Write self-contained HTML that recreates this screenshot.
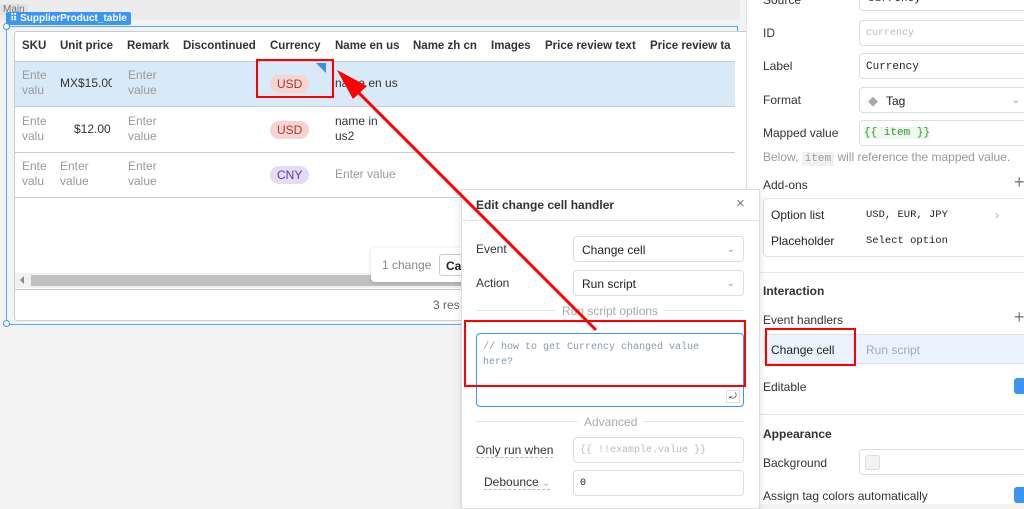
<!DOCTYPE html>
<html><head><meta charset="utf-8"><style>
*{box-sizing:border-box;margin:0;padding:0}
body{width:1024px;height:504px;overflow:hidden;background:#f3f3f3;font-family:"Liberation Sans",sans-serif;font-size:12px;color:#222;position:relative}
.a{position:absolute}
.ph{color:#9a9a9a}
.tag{position:absolute;border-radius:9px;padding:2px 7px;font-size:12px}
.mono{font-family:"Liberation Mono",monospace}
.inp{position:absolute;border:1px solid #ddd;border-radius:4px;background:#fff}
.chev{position:absolute;right:8px;top:7px;color:#999;font-size:10px}
</style></head><body>
<div class="a" style="left:0;top:0;width:740px;height:20px;background:#ececec"></div>
<div class="a" style="left:0;top:4px;font-size:10px;color:#777;background:#e2e2e2;padding:0 3px;border-radius:2px">Main</div>
<div class="a" style="left:6px;top:12px;background:#3b95f5;color:#fff;font-size:10px;font-weight:bold;padding:1px 4px;border-radius:2px">⠿ SupplierProduct_table</div>
<div class="a" style="left:6px;top:26px;width:732px;height:299px;border:1px solid #5aa8f7"></div>
<div class="a" style="left:3px;top:23px;width:7px;height:7px;border:1px solid #3b95f5;border-radius:50%;background:#fff"></div>
<div class="a" style="left:3px;top:320px;width:7px;height:7px;border:1px solid #3b95f5;border-radius:50%;background:#fff"></div>
<div class="a" style="left:14px;top:31px;width:740px;height:290px;background:#fff;border:1px solid #ccc;border-radius:3px"></div>
<!-- header -->
<div class="a" style="left:15px;top:61px;width:720px;height:1px;background:#ccc"></div>
<div class="a" style="top:40px;left:22px;font-weight:bold;color:#333;white-space:nowrap;font-size:11.5px">
<span class="a" style="left:0">SKU</span><span class="a" style="left:38px">Unit price</span><span class="a" style="left:105px">Remark</span><span class="a" style="left:161px">Discontinued</span><span class="a" style="left:248px">Currency</span><span class="a" style="left:313px">Name en us</span><span class="a" style="left:391px">Name zh cn</span><span class="a" style="left:469px">Images</span><span class="a" style="left:523px">Price review text</span><span class="a" style="left:628px">Price review ta</span></div>
<!-- rows -->
<div class="a" style="left:15px;top:62px;width:720px;height:44px;background:#d8e9f7"></div>
<div class="a" style="left:15px;top:106px;width:720px;height:1px;background:#ccc"></div>
<div class="a" style="left:15px;top:152px;width:720px;height:1px;background:#ccc"></div>
<div class="a" style="left:15px;top:197px;width:720px;height:1px;background:#ccc"></div>
<div class="a ph" style="left:22px;top:68px;line-height:15px;width:24px;overflow:hidden">Ente<br>valu</div>
<div class="a" style="left:60px;top:76px;width:52px;overflow:hidden;white-space:nowrap;color:#333">MX$15.00</div>
<div class="a ph" style="left:128px;top:68px;line-height:15px">Enter<br>value</div>
<div class="tag" style="left:270px;top:75px;background:#f6d4d1;color:#b1372c">USD</div>
<div class="a" style="left:316px;top:63px;width:0;height:0;border-top:10px solid #3b8ee0;border-left:10px solid transparent"></div>
<div class="a" style="left:335px;top:76px;color:#333">name en us</div>
<div class="a ph" style="left:22px;top:114px;line-height:15px;width:24px;overflow:hidden">Ente<br>valu</div>
<div class="a" style="left:74px;top:122px;color:#333">$12.00</div>
<div class="a ph" style="left:128px;top:114px;line-height:15px">Enter<br>value</div>
<div class="tag" style="left:270px;top:121px;background:#f6d4d1;color:#b1372c">USD</div>
<div class="a" style="left:335px;top:114px;line-height:15px;color:#333">name in<br>us2</div>
<div class="a ph" style="left:22px;top:159px;line-height:15px;width:24px;overflow:hidden">Ente<br>valu</div>
<div class="a ph" style="left:60px;top:159px;line-height:15px">Enter<br>value</div>
<div class="a ph" style="left:128px;top:159px;line-height:15px">Enter<br>value</div>
<div class="tag" style="left:270px;top:166px;background:#e4dbf7;color:#5a3da8">CNY</div>
<div class="a ph" style="left:335px;top:167px">Enter value</div>
<!-- scrollbar -->
<div class="a" style="left:15px;top:273px;width:720px;height:15px;background:#f1f1f1"></div>
<div class="a" style="left:31px;top:275px;width:700px;height:11px;background:#c1c1c1"></div>
<div class="a" style="left:20px;top:276px;width:0;height:0;border-right:4px solid #888;border-top:4px solid transparent;border-bottom:4px solid transparent"></div>
<div class="a" style="left:15px;top:289px;width:720px;height:1px;background:#ccc"></div>
<div class="a" style="left:433px;top:298px;color:#666">3 res</div>
<div class="a" style="left:371px;top:248px;width:100px;height:34px;background:#fff;border-radius:4px;box-shadow:0 1px 4px rgba(0,0,0,.15)"></div>
<div class="a" style="left:382px;top:258px;color:#888">1 change</div>
<div class="a" style="left:439px;top:254px;width:40px;height:22px;border:1px solid #ccc;border-radius:3px;padding:4px 6px;font-weight:bold">Ca</div>
<!-- right panel -->
<div class="a" style="left:746px;top:0;width:278px;height:504px;background:#fff;border-left:1px solid #e4e4e4"></div>
<div class="a" style="left:763px;top:-7px;color:#333">Source</div>
<div class="inp" style="left:859px;top:-12px;width:170px;height:23px"><span class="a mono" style="left:8px;top:4px;font-size:11px">currency</span></div>
<div class="a" style="left:763px;top:26px;color:#333">ID</div>
<div class="inp" style="left:859px;top:20px;width:170px;height:26px"><span class="a mono ph" style="left:6px;top:7px;font-size:10px;color:#bbb">currency</span></div>
<div class="a" style="left:763px;top:59px;color:#333">Label</div>
<div class="inp" style="left:859px;top:53px;width:170px;height:26px"><span class="a mono" style="left:6px;top:7px;font-size:11px">Currency</span></div>
<div class="a" style="left:763px;top:93px;color:#333">Format</div>
<div class="inp" style="left:859px;top:87px;width:170px;height:26px"><span class="a" style="left:8px;top:5px;color:#aaa;font-size:13px">◆</span><span class="a" style="left:26px;top:6px;font-size:12px">Tag</span><span class="chev">⌄</span></div>
<div class="a" style="left:763px;top:126px;color:#333">Mapped value</div>
<div class="inp" style="left:859px;top:120px;width:170px;height:26px"><span class="a mono" style="left:4px;top:6px;font-size:11px;color:#2a9d2a;background:#eef8ee">{{ item }}</span></div>
<div class="a" style="left:763px;top:150px;color:#999;font-size:12px">Below, <span class="mono" style="background:#f1f1f1;padding:1px 3px;font-size:11px">item</span> will reference the mapped value.</div>
<div class="a" style="left:763px;top:178px;color:#333">Add-ons</div>
<div class="a" style="left:1014px;top:172px;color:#777;font-size:18px">+</div>
<div class="a" style="left:763px;top:198px;width:270px;height:59px;border:1px solid #e2e2e2;border-radius:4px"></div>
<div class="a" style="left:771px;top:208px;color:#222">Option list</div>
<div class="a mono" style="left:866px;top:209px;font-size:10.5px">USD, EUR, JPY</div>
<div class="a" style="left:995px;top:208px;color:#aaa">›</div>
<div class="a" style="left:771px;top:234px;color:#222">Placeholder</div>
<div class="a mono" style="left:866px;top:235px;font-size:10.5px">Select option</div>
<div class="a" style="left:760px;top:272px;width:264px;height:1px;background:#e8e8e8"></div>
<div class="a" style="left:763px;top:284px;font-weight:bold;color:#333">Interaction</div>
<div class="a" style="left:763px;top:313px;color:#333">Event handlers</div>
<div class="a" style="left:1014px;top:307px;color:#777;font-size:18px">+</div>
<div class="a" style="left:764px;top:334px;width:270px;height:30px;background:#eaf3fd;border:1px solid #e2e2e2"></div>
<div class="a" style="left:771px;top:343px;color:#222">Change cell</div>
<div class="a" style="left:866px;top:343px;color:#aaa">Run script</div>
<div class="a" style="left:765px;top:328px;width:91px;height:38px;border:2px solid #f00"></div>
<div class="a" style="left:763px;top:380px;color:#333">Editable</div>
<div class="a" style="left:1014px;top:378px;width:14px;height:16px;background:#3b95f5;border-radius:3px"></div>
<div class="a" style="left:760px;top:414px;width:264px;height:1px;background:#e8e8e8"></div>
<div class="a" style="left:763px;top:427px;font-weight:bold;color:#333">Appearance</div>
<div class="a" style="left:763px;top:456px;color:#333">Background</div>
<div class="inp" style="left:859px;top:449px;width:170px;height:26px"><span class="a" style="left:5px;top:5px;width:15px;height:15px;border:1px solid #ddd;border-radius:3px;background:#f3f3f3"></span></div>
<div class="a" style="left:763px;top:489px;color:#333">Assign tag colors automatically</div>
<div class="a" style="left:1014px;top:487px;width:14px;height:16px;background:#3b95f5;border-radius:3px"></div>
<!-- modal -->
<div class="a" style="left:461px;top:189px;width:299px;height:320px;background:#fff;border:1px solid #ddd;box-shadow:0 2px 8px rgba(0,0,0,.12)"></div>
<div class="a" style="left:476px;top:198px;font-weight:bold;color:#333">Edit change cell handler</div>
<div class="a" style="left:736px;top:195px;color:#777;font-size:15px">×</div>
<div class="a" style="left:462px;top:220px;width:298px;height:1px;background:#e4e4e4"></div>
<div class="a" style="left:476px;top:242px;color:#333">Event</div>
<div class="inp" style="left:573px;top:236px;width:171px;height:26px"><span class="a" style="left:8px;top:6px;color:#222">Change cell</span><span class="chev">⌄</span></div>
<div class="a" style="left:476px;top:276px;color:#333">Action</div>
<div class="inp" style="left:573px;top:270px;width:171px;height:26px"><span class="a" style="left:8px;top:6px;color:#222">Run script</span><span class="chev">⌄</span></div>
<div class="a" style="left:476px;top:310px;width:268px;height:1px;background:#e4e4e4"></div>
<div class="a" style="left:556px;top:304px;background:#fff;padding:0 6px;color:#aaa">Run script options</div>
<div class="a" style="left:476px;top:333px;width:268px;height:74px;border:1px solid #3b95f5;border-radius:4px"></div>
<div class="a mono" style="left:483px;top:340px;font-size:10px;line-height:15px;color:#8a9ab0">// how to get Currency changed value<br>here?</div>
<div class="a" style="left:726px;top:390px;width:14px;height:13px;border:1px solid #ddd;font-size:9px;text-align:center">⤾</div>
<div class="a" style="left:464px;top:320px;width:282px;height:67px;border:2px solid #f00"></div>
<div class="a" style="left:476px;top:421px;width:268px;height:1px;background:#e4e4e4"></div>
<div class="a" style="left:578px;top:415px;background:#fff;padding:0 6px;color:#aaa">Advanced</div>
<div class="a" style="left:476px;top:443px;color:#333;border-bottom:1px dashed #bbb">Only run when</div>
<div class="inp" style="left:573px;top:437px;width:171px;height:26px"><span class="a mono" style="left:6px;top:7px;font-size:10px;color:#bbb">{{ !!example.value }}</span></div>
<div class="a" style="left:484px;top:475px;color:#333;border-bottom:1px dashed #bbb">Debounce <span style="color:#aaa;font-size:10px">⌄</span></div>
<div class="inp" style="left:573px;top:470px;width:171px;height:26px"><span class="a mono" style="left:6px;top:7px;font-size:10px">0</span></div>
<!-- red highlight and arrow -->
<div class="a" style="left:256px;top:59px;width:78px;height:39px;border:2px solid #f00"></div>
<svg class="a" style="left:0;top:0" width="1024" height="504"><line x1="596" y1="330" x2="350" y2="84" stroke="#f00" stroke-width="3"/><polygon points="337,70 367,86 353,99" fill="#f00"/></svg>
</body></html>
